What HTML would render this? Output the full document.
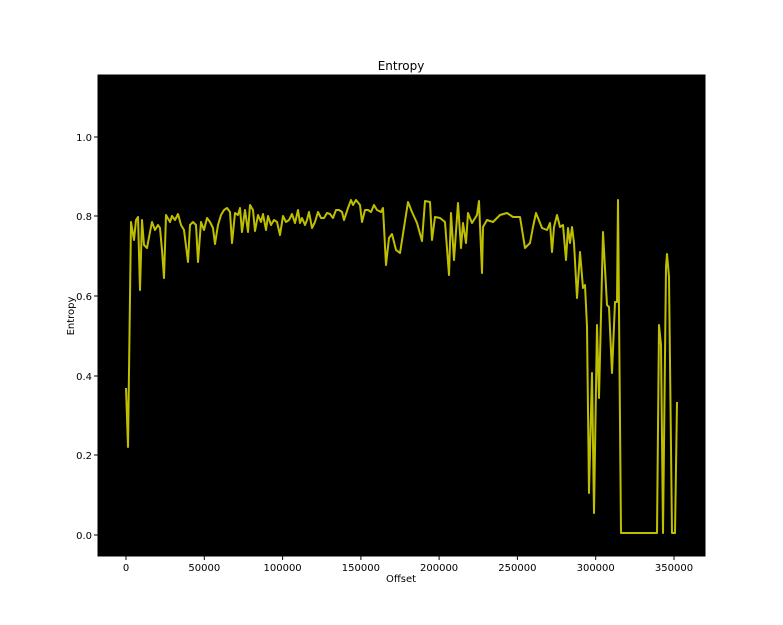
<!DOCTYPE html>
<html><head><style>body{margin:0;background:#fff}svg{display:block}text{font-family:"DejaVu Sans","Liberation Sans",sans-serif;fill:#000}</style></head><body>
<svg width="783" height="625" viewBox="0 0 783 625" xmlns="http://www.w3.org/2000/svg">
<rect x="98" y="75" width="607" height="481" fill="#000"/>
<polyline fill="none" stroke="#bfbf00" stroke-width="2" stroke-linejoin="round" points="126,388 128,447 131,222 134,240 136,220 138,217 140,290 142,220 144,245 147,248 150,232 152,222 155,230 158,225 160,228 162,250 164,278 166,215 170,222 172,216 175,220 178,214 181,225 184,230 188,262 190,225 193,222 196,225 198,262 201,222 204,230 207,218 210,222 213,228 215,244 218,225 221,215 224,210 227,208 230,212 232,243 235,213 238,215 240,208 242,232 245,210 248,232 250,205 253,210 255,231 258,215 261,222 263,214 266,230 268,216 271,225 274,220 277,222 280,235 283,216 286,222 289,220 292,214 295,223 298,210 300,223 302,218 305,225 307,220 309,212 312,228 315,222 318,212 321,218 324,218 327,213 330,214 333,218 336,210 339,210 342,212 344,220 348,208 351,200 353,205 356,200 360,205 362,222 365,210 368,210 371,212 374,205 377,210 381,212 383,208 386,265 389,238 392,234 396,250 400,253 408,202 412,212 417,223 422,241 425,201 430,202 432,240 435,217 440,218 445,222 449,275 451,213 454,260 458,203 461,248 463,223 466,243 468,213 472,223 477,215 479,201 482,273 483,227 487,220 493,222 500,215 507,213 513,217 520,217 525,248 530,243 533,227 536,213 542,228 547,230 550,223 552,252 554,227 557,215 560,227 563,225 566,260 568,228 570,243 572,227 574,243 577,298 580,252 583,288 585,285 587,327 589,493 592,373 594,513 597,325 599,398 603,232 607,305 609,307 612,373 615,302 617,302 618,200 621,533 657,533 659,325 661,345 663,533 666,267 667,254 669,277 672,533 675,533 677,402"/>
<rect x="98" y="75" width="607" height="481" fill="none" stroke="#000" stroke-width="1"/>
<text x="401" y="70" font-size="12" text-anchor="middle">Entropy</text>
<g stroke="#000" stroke-width="1">
<line x1="94" x2="98" y1="535" y2="535"/><line x1="94" x2="98" y1="455" y2="455"/><line x1="94" x2="98" y1="376" y2="376"/><line x1="94" x2="98" y1="296" y2="296"/><line x1="94" x2="98" y1="216" y2="216"/><line x1="94" x2="98" y1="137" y2="137"/>
<line y1="556" y2="560" x1="126" x2="126"/><line y1="556" y2="560" x1="204.3" x2="204.3"/><line y1="556" y2="560" x1="282.6" x2="282.6"/><line y1="556" y2="560" x1="360.9" x2="360.9"/><line y1="556" y2="560" x1="439.1" x2="439.1"/><line y1="556" y2="560" x1="517.4" x2="517.4"/><line y1="556" y2="560" x1="595.7" x2="595.7"/><line y1="556" y2="560" x1="674" x2="674"/>
</g>
<g font-size="10" text-anchor="end">
<text x="92" y="539">0.0</text><text x="92" y="459">0.2</text><text x="92" y="380">0.4</text><text x="92" y="300">0.6</text><text x="92" y="220">0.8</text><text x="92" y="141">1.0</text>
</g>
<g font-size="10" text-anchor="middle">
<text x="126" y="571">0</text><text x="204.3" y="571">50000</text><text x="282.6" y="571">100000</text><text x="360.9" y="571">150000</text><text x="439.1" y="571">200000</text><text x="517.4" y="571">250000</text><text x="595.7" y="571">300000</text><text x="674" y="571">350000</text>
<text x="401" y="582">Offset</text>
<text x="0" y="0" transform="translate(74,316) rotate(-90)">Entropy</text>
</g>
</svg>
</body></html>
